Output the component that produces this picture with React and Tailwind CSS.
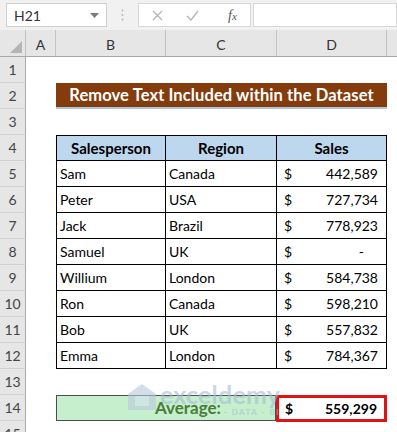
import React from "react";

const FONT = { fontFamily: "Lato, 'Liberation Sans', sans-serif" };

const data = [
  ["Sam", "Canada", "442,589"],
  ["Peter", "USA", "727,734"],
  ["Jack", "Brazil", "778,923"],
  ["Samuel", "UK", "-"],
  ["Willium", "London", "584,738"],
  ["Ron", "Canada", "598,210"],
  ["Bob", "UK", "557,832"],
  ["Emma", "London", "784,367"],
];

const Row = ({ n, children }) => (
  <div className="flex h-[26px]">
    <div className="w-[26px] shrink-0 bg-[#e6e6e6] border-r border-r-[#a8a8a8] border-b border-b-[#d2d2d2] flex items-center justify-center text-[14px] text-[#444]">
      {n}
    </div>
    <div className="w-[30px] shrink-0" />
    {children}
  </div>
);

const FormulaBar = () => (
  <div className="h-[30px] bg-[#f1f1f1] flex items-start pt-[3px] pl-[6px] gap-0">
    <div className="w-[101px] h-[24px] bg-white border border-[#cfcfcf] flex items-center justify-between pl-[7px] pr-[7px]">
      <span className="text-[14px] text-[#333]">H21</span>
      <svg width="9" height="5" viewBox="0 0 9 5"><path d="M0 0h9L4.5 5z" fill="#7a7a7a" /></svg>
    </div>
    <div className="w-[31px] h-[24px] flex items-center justify-center">
      <svg width="3" height="12" viewBox="0 0 3 12">
        <circle cx="1.5" cy="1.5" r="1" fill="#b9b9b9" />
        <circle cx="1.5" cy="6" r="1" fill="#b9b9b9" />
        <circle cx="1.5" cy="10.5" r="1" fill="#b9b9b9" />
      </svg>
    </div>
    <div className="w-[113px] h-[24px] bg-white border border-[#d8d8d8] flex items-center">
      <div className="w-[36px] flex justify-center">
        <svg width="11" height="11" viewBox="0 0 11 11"><path d="M1 1l9 9M10 1l-9 9" stroke="#b4b4b4" strokeWidth="1.3" /></svg>
      </div>
      <div className="w-[34px] flex justify-center">
        <svg width="13" height="11" viewBox="0 0 13 11"><path d="M1 6l4 4 7-9" stroke="#b4b4b4" strokeWidth="1.3" fill="none" /></svg>
      </div>
      <div className="flex-1 flex justify-center pl-[6px]">
        <span className="text-[14px] italic text-[#555]" style={{ fontFamily: "'Liberation Serif', serif" }}>
          f<span className="text-[11px]">x</span>
        </span>
      </div>
    </div>
    <div className="flex-1 h-[24px] bg-white border border-[#d8d8d8] ml-[2px]" />
  </div>
);

const ColHeader = () => (
  <div className="flex h-[27px] bg-[#e6e6e6] border-b border-[#a8a8a8]">
    <div className="w-[26px] shrink-0 border-r border-[#c4c4c4] flex items-end justify-end pr-[3px] pb-[3px]">
      <svg width="12" height="12" viewBox="0 0 12 12"><path d="M12 0v12H0z" fill="#b5b5b5" /></svg>
    </div>
    {[
      ["A", "w-[30px]"],
      ["B", "w-[110px]"],
      ["C", "w-[111px]"],
      ["D", "w-[110px]"],
    ].map(([l, w]) => (
      <div key={l} className={`${w} shrink-0 flex items-center justify-center text-[14px] text-[#333] border-r border-[#c4c4c4] pt-[2px]`}>
        {l}
      </div>
    ))}
    <div className="flex-1" />
  </div>
);

export default function App() {
  return (
    <div className="w-[397px] h-[432px] overflow-hidden bg-white" style={FONT}>
      <FormulaBar />
      <ColHeader />
      <Row n="1" />
      <Row n="2">
        <div className="w-[331px] h-full bg-[#843c0c] border-b-2 border-[#a9c6e4] flex items-center justify-center text-white font-bold text-[16.5px] tracking-[0.1px]">
          Remove Text Included within the Dataset
        </div>
      </Row>
      <Row n="3" />
      <Row n="4">
        <div className="w-[110px] h-full bg-[#bdd7ee] border border-black flex items-center justify-center font-bold text-[15px] text-black">
          Salesperson
        </div>
        <div className="w-[111px] h-full bg-[#bdd7ee] border-y border-r border-black flex items-center justify-center font-bold text-[15px] text-black">
          Region
        </div>
        <div className="w-[110px] h-full bg-[#bdd7ee] border-y border-r border-black flex items-center justify-center font-bold text-[15px] text-black">
          Sales
        </div>
      </Row>
      {data.map(([name, region, sales], i) => (
        <Row key={name} n={String(i + 5)}>
          <div className="w-[110px] h-full border-x border-b border-black flex items-center pl-[3px] text-[14px] text-black">
            {name}
          </div>
          <div className="w-[111px] h-full border-r border-b border-black flex items-center pl-[3px] text-[14px] text-black">
            {region}
          </div>
          <div className="w-[110px] h-full border-r border-b border-black flex items-center justify-between pl-[7px] text-[14px] text-black">
            <span>$</span>
            <span className={sales === "-" ? "pr-[22px]" : "pr-[8px]"}>{sales}</span>
          </div>
        </Row>
      ))}
      <div className="relative">
        <Row n="13" />
        <Row n="14">
          <div className="w-[220px] h-full bg-[#c6efce] border border-[#4d4d4d] flex items-center justify-end pr-[54px] font-bold text-[17px] text-[#4a7c37]">
            Average:
          </div>
          <div className="w-[111px] h-[27px] border-[3px] border-[#e01414] flex items-center justify-between pl-[6px] pr-[7px] font-bold text-[14px] text-black">
            <span>$</span>
            <span>559,299</span>
          </div>
        </Row>
        <div className="absolute left-[126px] top-[13px] flex items-start gap-[2px] opacity-60 pointer-events-none">
          <svg width="32" height="30" viewBox="0 0 32 30">
            <path d="M2 12L16 2l14 10v16H2z" fill="#b8c9dc" />
            <path d="M9 14h14v10H9z" fill="#d5e0ec" />
          </svg>
          <div className="flex flex-col items-end leading-none">
            <span className="text-[25px] font-bold text-[#a8bcd3] tracking-[0.2px]">exceldemy</span>
            <span className="text-[8px] font-bold text-[#a8bcd3] tracking-[1.5px] mt-[1px]">- DATA - BI</span>
          </div>
        </div>
      </div>
      <Row n="15" />
    </div>
  );
}
